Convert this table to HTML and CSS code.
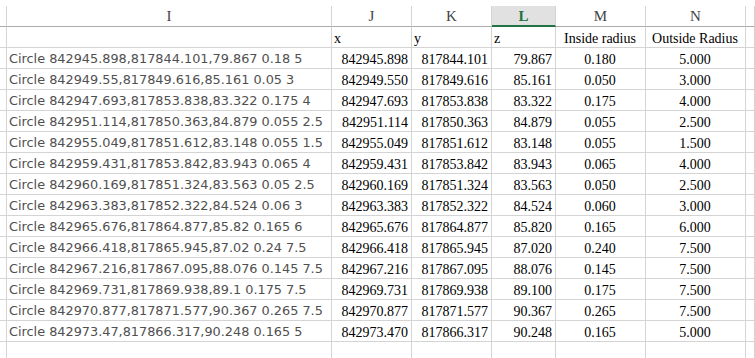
FILE: index.html
```html
<!doctype html>
<html lang="en">
  <head>
    <meta charset="UTF-8" />
    <title>Circles - Sheet1</title>
    <link rel="stylesheet" href="styles.css">
  </head>
  <body>
    <div class="top-gap"></div>
    <div class="sheet">
      <!-- column letters -->
      <div class="c hd"></div>
      <div class="c hd">I</div>
      <div class="c hd">J</div>
      <div class="c hd">K</div>
      <div class="c hd active">L</div>
      <div class="c hd">M</div>
      <div class="c hd">N</div>
      <div class="c hd"></div>

      <!-- titles -->
      <div class="c"></div>
      <div class="c"></div>
      <div class="c num left">x</div>
      <div class="c num left">y</div>
      <div class="c num left">z</div>
      <div class="c num mid">Inside radius</div>
      <div class="c num mid">Outside Radius</div>
      <div class="c"></div>

      <div class="c"></div><div class="c txt">Circle 842945.898,817844.101,79.867 0.18 5</div><div class="c num">842945.898</div><div class="c num">817844.101</div><div class="c num">79.867</div><div class="c num mid">0.180</div><div class="c num mid">5.000</div><div class="c"></div>
      <div class="c"></div><div class="c txt">Circle 842949.55,817849.616,85.161 0.05 3</div><div class="c num">842949.550</div><div class="c num">817849.616</div><div class="c num">85.161</div><div class="c num mid">0.050</div><div class="c num mid">3.000</div><div class="c"></div>
      <div class="c"></div><div class="c txt">Circle 842947.693,817853.838,83.322 0.175 4</div><div class="c num">842947.693</div><div class="c num">817853.838</div><div class="c num">83.322</div><div class="c num mid">0.175</div><div class="c num mid">4.000</div><div class="c"></div>
      <div class="c"></div><div class="c txt">Circle 842951.114,817850.363,84.879 0.055 2.5</div><div class="c num">842951.114</div><div class="c num">817850.363</div><div class="c num">84.879</div><div class="c num mid">0.055</div><div class="c num mid">2.500</div><div class="c"></div>
      <div class="c"></div><div class="c txt">Circle 842955.049,817851.612,83.148 0.055 1.5</div><div class="c num">842955.049</div><div class="c num">817851.612</div><div class="c num">83.148</div><div class="c num mid">0.055</div><div class="c num mid">1.500</div><div class="c"></div>
      <div class="c"></div><div class="c txt">Circle 842959.431,817853.842,83.943 0.065 4</div><div class="c num">842959.431</div><div class="c num">817853.842</div><div class="c num">83.943</div><div class="c num mid">0.065</div><div class="c num mid">4.000</div><div class="c"></div>
      <div class="c"></div><div class="c txt">Circle 842960.169,817851.324,83.563 0.05 2.5</div><div class="c num">842960.169</div><div class="c num">817851.324</div><div class="c num">83.563</div><div class="c num mid">0.050</div><div class="c num mid">2.500</div><div class="c"></div>
      <div class="c"></div><div class="c txt">Circle 842963.383,817852.322,84.524 0.06 3</div><div class="c num">842963.383</div><div class="c num">817852.322</div><div class="c num">84.524</div><div class="c num mid">0.060</div><div class="c num mid">3.000</div><div class="c"></div>
      <div class="c"></div><div class="c txt">Circle 842965.676,817864.877,85.82 0.165 6</div><div class="c num">842965.676</div><div class="c num">817864.877</div><div class="c num">85.820</div><div class="c num mid">0.165</div><div class="c num mid">6.000</div><div class="c"></div>
      <div class="c"></div><div class="c txt">Circle 842966.418,817865.945,87.02 0.24 7.5</div><div class="c num">842966.418</div><div class="c num">817865.945</div><div class="c num">87.020</div><div class="c num mid">0.240</div><div class="c num mid">7.500</div><div class="c"></div>
      <div class="c"></div><div class="c txt">Circle 842967.216,817867.095,88.076 0.145 7.5</div><div class="c num">842967.216</div><div class="c num">817867.095</div><div class="c num">88.076</div><div class="c num mid">0.145</div><div class="c num mid">7.500</div><div class="c"></div>
      <div class="c"></div><div class="c txt">Circle 842969.731,817869.938,89.1 0.175 7.5</div><div class="c num">842969.731</div><div class="c num">817869.938</div><div class="c num">89.100</div><div class="c num mid">0.175</div><div class="c num mid">7.500</div><div class="c"></div>
      <div class="c"></div><div class="c txt">Circle 842970.877,817871.577,90.367 0.265 7.5</div><div class="c num">842970.877</div><div class="c num">817871.577</div><div class="c num">90.367</div><div class="c num mid">0.265</div><div class="c num mid">7.500</div><div class="c"></div>
      <div class="c"></div><div class="c txt">Circle 842973.47,817866.317,90.248 0.165 5</div><div class="c num">842973.470</div><div class="c num">817866.317</div><div class="c num">90.248</div><div class="c num mid">0.165</div><div class="c num mid">5.000</div><div class="c"></div>

      <!-- empty row -->
      <div class="c"></div><div class="c"></div><div class="c"></div><div class="c"></div><div class="c"></div><div class="c"></div><div class="c"></div><div class="c"></div>
    </div>
  </body>
</html>
```

FILE: styles.css
```css
* {
  margin: 0;
  padding: 0;
  box-sizing: border-box;
}

html,
body {
  width: 755px;
  height: 358px;
  overflow: hidden;
  background: #fff;
}

.top-gap {
  height: 6px;
}

.sheet {
  display: grid;
  grid-template-columns: 7px 325px 80px 80px 64px 90px 100px 1fr;
  grid-auto-rows: 21px;
}

.c {
  display: flex;
  align-items: flex-end;
  border-right: 1px solid #d4d4d4;
  border-bottom: 1px solid #d4d4d4;
  white-space: nowrap;
  overflow: hidden;
}

/* column letter header */
.hd {
  justify-content: center;
  border-bottom-color: #ababab;
  font-family: "Liberation Serif", serif;
  font-size: 15px;
  line-height: 15px;
  padding-bottom: 2px;
  color: #444;
}

.hd.active {
  background: #e1e1e1;
  border-bottom: 2px solid #217346;
  color: #217346;
  font-weight: bold;
  padding-bottom: 1px;
}

/* plain text column */
.txt {
  font-family: "DejaVu Sans", sans-serif;
  font-size: 12.85px;
  line-height: 13px;
  padding: 0 0 3px 2px;
  color: #505050;
}

/* numeric cells */
.num {
  justify-content: flex-end;
  font-family: "Liberation Serif", serif;
  font-size: 14px;
  line-height: 14px;
  padding: 0 3px 1px 2px;
  color: #000;
}

.num.left {
  justify-content: flex-start;
}

.num.mid {
  justify-content: center;
}
```
